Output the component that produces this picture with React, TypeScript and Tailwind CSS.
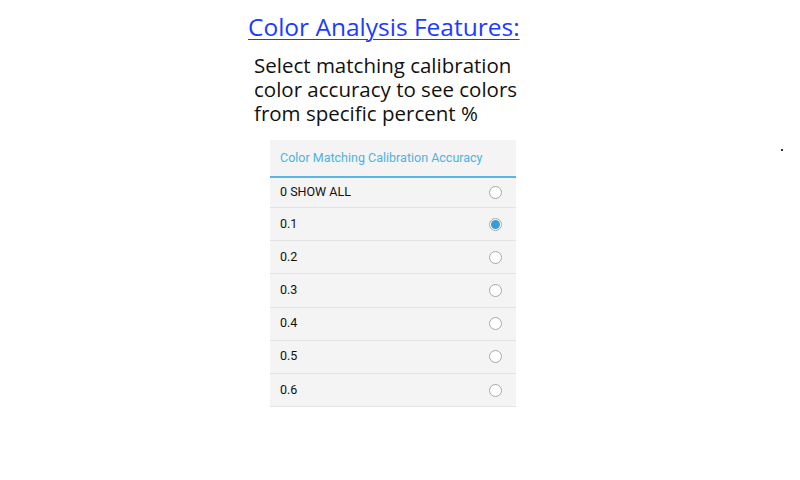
const options = ['0 SHOW ALL', '0.1', '0.2', '0.3', '0.4', '0.5', '0.6'];

function Radio({ checked }: { checked: boolean }) {
    return (
        <span className="flex h-[13px] w-[13px] items-center justify-center rounded-full border border-[#a8a8a8] bg-white">
            {checked && <span className="h-[9px] w-[9px] rounded-full bg-[#3a9bd5]" />}
        </span>
    );
}

export default function App() {
    const selected = 1;
    return (
        <div className="relative h-[480px] w-[800px] bg-white" style={{ fontFamily: '"Open Sans", sans-serif' }}>
            <div className="flex flex-col items-start pt-[10px]">
                <a href="#" className="ml-[248px] text-[24.5px] leading-[34px] text-[#1b3cff] underline decoration-1 underline-offset-[3px]">
                    Color Analysis Features:
                </a>
                <p className="mt-[9px] ml-[254px] w-[275px] text-[20.5px] leading-[24px] text-[#111]">
                    Select matching calibration color accuracy to see colors from specific percent %
                </p>
            </div>

            <div className="mt-[15px] ml-[270px] w-[246px] bg-[#f4f4f4]" style={{ fontFamily: 'Roboto, sans-serif' }}>
                <div className="flex h-[38px] items-center border-b-2 border-[#5ab6e3] px-[10px] text-[12.5px] text-[#4fb2e2]">
                    Color Matching Calibration Accuracy
                </div>
                {options.map((label, i) => (
                    <div
                        key={label}
                        className={`flex items-center justify-between border-b border-[#e3e3e3] pl-[10px] pr-[14px] text-[12.5px] text-[#111] ${i === 0 ? 'h-[30px]' : 'h-[33.2px]'}`}
                    >
                        <span>{label}</span>
                        <Radio checked={i === selected} />
                    </div>
                ))}
            </div>

            <span className="absolute left-[781px] top-[149px] h-[2px] w-[2px] bg-[#333]" />
        </div>
    );
}
